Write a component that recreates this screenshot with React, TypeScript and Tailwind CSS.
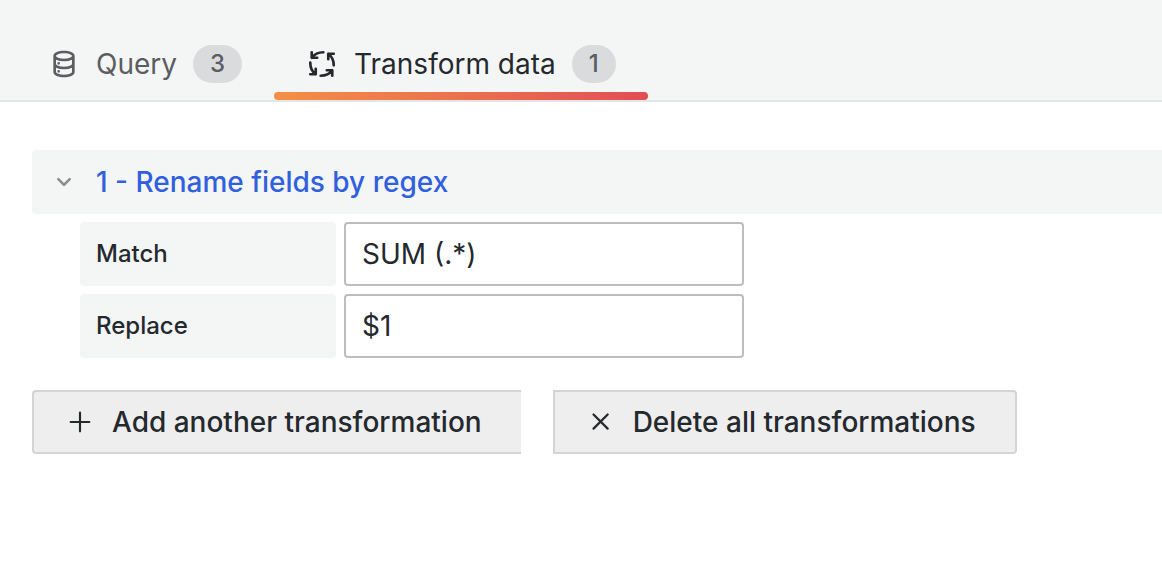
import { useState, type ReactNode } from "react";

function Icon({ children, className = "size-8" }: { children: ReactNode; className?: string }) {
  return (
    <svg viewBox="0 0 24 24" fill="currentColor" aria-hidden="true" className={`shrink-0 ${className}`}>
      {children}
    </svg>
  );
}

function DatabaseIcon() {
  return (
    <Icon>
      <path d="M8,16.5a1,1,0,1,0,1,1A1,1,0,0,0,8,16.5ZM12,2C8,2,4,3.37,4,6V18c0,2.63,4,4,8,4s8-1.37,8-4V6C20,3.37,16,2,12,2Zm6,16c0,.71-2.28,2-6,2s-6-1.29-6-2V14.73A13.16,13.16,0,0,0,12,16a13.16,13.16,0,0,0,6-1.27Zm0-6c0,.71-2.28,2-6,2s-6-1.29-6-2V8.73A13.16,13.16,0,0,0,12,10a13.16,13.16,0,0,0,6-1.27ZM12,8C8.28,8,6,6.71,6,6s2.28-2,6-2,6,1.29,6,2S15.72,8,12,8ZM8,10.5a1,1,0,1,0,1,1A1,1,0,0,0,8,10.5Z" />
    </Icon>
  );
}

function ProcessIcon() {
  const arrow = "M4.3 3.2v4.1h4.1M4.3 7.3C6.3 4.6 9.4 3.2 13 3.2";
  return (
    <Icon>
      <g fill="none" stroke="currentColor" strokeWidth="2" strokeLinecap="round" strokeLinejoin="round">
        <path d={arrow} />
        <path d={arrow} transform="rotate(90 12 12)" />
        <path d={arrow} transform="rotate(180 12 12)" />
        <path d={arrow} transform="rotate(270 12 12)" />
      </g>
    </Icon>
  );
}

function Tab({
  icon,
  label,
  count,
  active,
  onSelect,
}: {
  icon: ReactNode;
  label: string;
  count: number;
  active: boolean;
  onSelect: () => void;
}) {
  return (
    <button
      type="button"
      role="tab"
      aria-selected={active}
      onClick={onSelect}
      className={`flex flex-col ${active ? "text-[#24292e]" : "text-[#5b5d62]"}`}
    >
      <span className="flex h-14 items-center gap-4 px-8">
        {icon}
        <span className="text-[28px] leading-9">{label}</span>
        <span className="rounded-full bg-[#dadbdd] px-[17px] text-2xl/[38px] font-medium text-[#5b5d62]">{count}</span>
      </span>
      <span
        className={`h-2 w-full rounded-full ${active ? "bg-linear-to-r from-[#f48f45] to-[#e24d54]" : ""}`}
      />
    </button>
  );
}

function Field({
  id,
  label,
  value,
  onChange,
}: {
  id: string;
  label: string;
  value: string;
  onChange: (value: string) => void;
}) {
  return (
    <div className="flex gap-2">
      <label htmlFor={id} className="flex h-16 w-64 items-center rounded bg-[#f4f5f5] px-4 text-2xl font-medium">
        {label}
      </label>
      <input
        id={id}
        type="text"
        value={value}
        onChange={(e) => onChange(e.target.value)}
        className="h-16 w-100 rounded border-2 border-[#bdbdbd] bg-white px-4 text-[28px]"
      />
    </div>
  );
}

export default function App() {
  const [tab, setTab] = useState("transform");
  const [open, setOpen] = useState(true);
  const [match, setMatch] = useState("SUM (.*)");
  const [replace, setReplace] = useState("$1");

  return (
    <div className="min-h-screen bg-white font-[Inter,sans-serif] text-[#24292e]">
      <div role="tablist" className="flex border-b-2 border-[#e3e4e4] bg-[#f4f5f5] pt-9 pl-4">
        <Tab icon={<DatabaseIcon />} label="Query" count={3} active={tab === "query"} onSelect={() => setTab("query")} />
        <Tab
          icon={<ProcessIcon />}
          label="Transform data"
          count={1}
          active={tab === "transform"}
          onSelect={() => setTab("transform")}
        />
      </div>

      <main className="pt-12 pl-8">
        <button
          type="button"
          aria-expanded={open}
          onClick={() => setOpen(!open)}
          className="flex h-16 w-full items-center gap-4 rounded-l bg-[#f4f5f5] px-4 text-[28px] font-medium text-[#3060dd]"
        >
          <Icon className="size-8 text-[#8b8d90]">
            <path d="M17,9.17a1,1,0,0,0-1.41,0L12,12.71,8.46,9.17a1,1,0,0,0-1.41,0,1,1,0,0,0,0,1.42l4.24,4.24a1,1,0,0,0,1.42,0L17,10.59A1,1,0,0,0,17,9.17Z" />
          </Icon>
          1 - Rename fields by regex
        </button>

        {open && (
          <div className="flex flex-col gap-2 pt-2 pl-12">
            <Field id="match" label="Match" value={match} onChange={setMatch} />
            <Field id="replace" label="Replace" value={replace} onChange={setReplace} />
          </div>
        )}

        <div className="flex gap-8 pt-8 text-[28px] font-medium">
          <button
            type="button"
            className="flex h-16 items-center gap-4 rounded-l border-2 border-r-0 border-[#d3d4d4] bg-[#eeeeee] pr-[39px] pl-[30px]"
          >
            <Icon>
              <path d="M19,11.2H12.8V5a.8.8,0,0,0-1.6,0v6.2H5a.8.8,0,0,0,0,1.6h6.2V19a.8.8,0,0,0,1.6,0V12.8H19a.8.8,0,0,0,0-1.6Z" />
            </Icon>
            Add another transformation
          </button>
          <button
            type="button"
            className="flex h-16 items-center gap-4 rounded-r border-2 border-[#d3d4d4] bg-[#eeeeee] pr-[39px] pl-[30px]"
          >
            <Icon>
              <path d="M6.4 6.4 17 17M17 6.4 6.4 17" stroke="currentColor" strokeWidth="1.7" strokeLinecap="round" />
            </Icon>
            Delete all transformations
          </button>
        </div>
      </main>
    </div>
  );
}
